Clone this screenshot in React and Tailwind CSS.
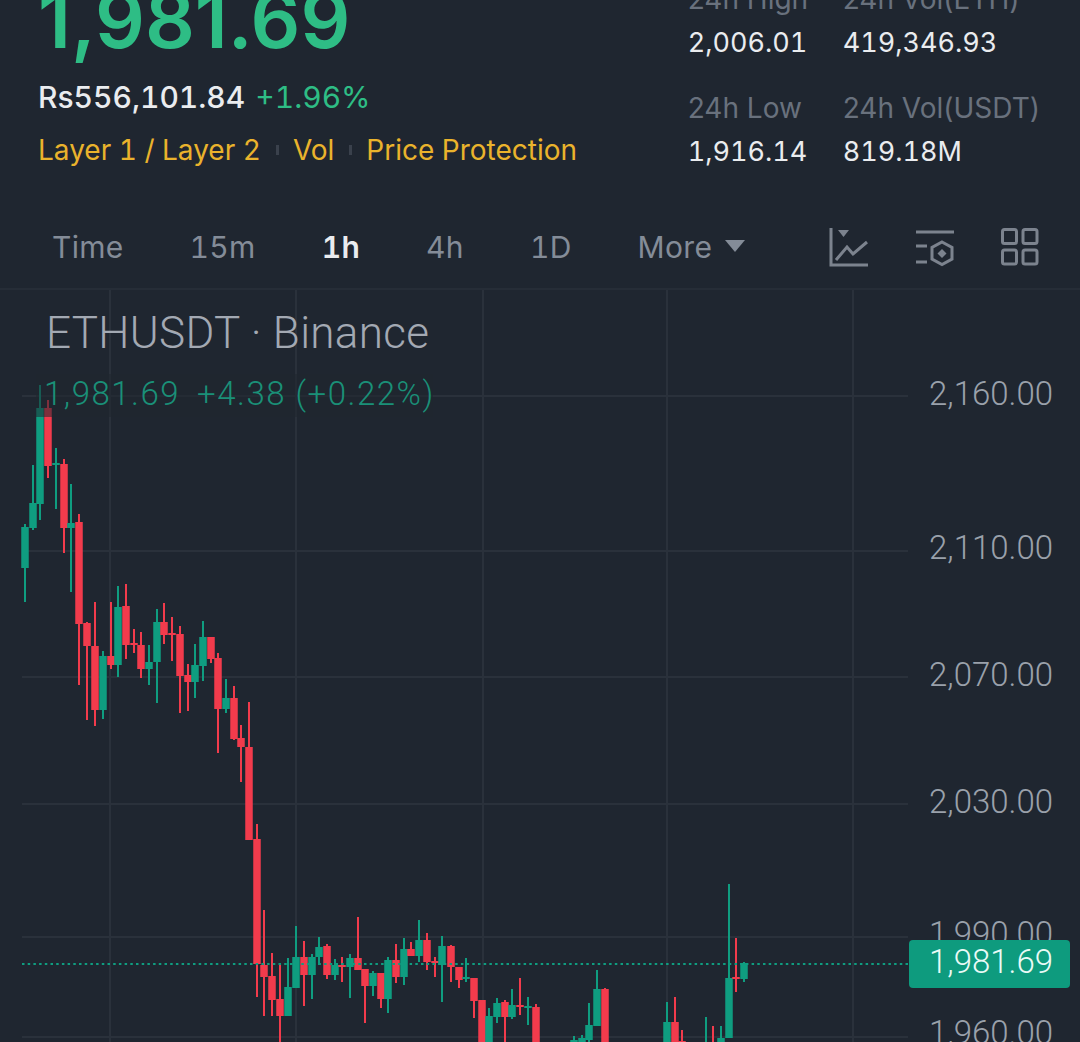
import React from "react";

// [center x, wick top, wick bottom, body top, body bottom, up?]
const candles = [
  [25, 524, 602, 527, 568, 1], [33, 465, 530, 503, 528, 1], [40, 385, 520, 408, 504, 1],
  [48, 400, 478, 408, 466, 0], [56, 448, 509, 463, 465, 1], [64, 459, 553, 464, 528, 0],
  [71, 484, 592, 523, 528, 1], [79, 514, 685, 522, 624, 0], [87, 622, 720, 623, 646, 0],
  [95, 602, 726, 646, 710, 0], [103, 651, 719, 656, 710, 1], [111, 602, 669, 656, 665, 0],
  [118, 586, 677, 607, 665, 1], [126, 584, 659, 606, 645, 0], [134, 629, 653, 643, 645, 0],
  [141, 632, 678, 645, 669, 0], [149, 645, 685, 662, 669, 1], [157, 609, 703, 622, 662, 1],
  [164, 603, 644, 622, 635, 0], [172, 617, 661, 633, 635, 0], [180, 626, 713, 634, 676, 0],
  [188, 664, 711, 675, 682, 0], [195, 644, 698, 665, 682, 1], [203, 621, 681, 637, 666, 1],
  [211, 637, 663, 637, 659, 0], [218, 653, 753, 658, 709, 0], [226, 679, 713, 698, 709, 1],
  [234, 686, 740, 698, 739, 0], [241, 725, 782, 738, 747, 0], [249, 702, 840, 747, 840, 0],
  [257, 824, 997, 839, 964, 0], [264, 910, 1016, 965, 977, 0], [272, 953, 1016, 976, 1000, 0],
  [280, 963, 1042, 999, 1016, 0], [288, 958, 1016, 987, 1016, 1], [296, 926, 988, 957, 988, 1],
  [304, 941, 1006, 957, 975, 0], [312, 954, 999, 957, 975, 1], [319, 937, 965, 947, 957, 1],
  [327, 944, 979, 946, 975, 0], [335, 959, 980, 965, 975, 1], [342, 957, 982, 965, 967, 0],
  [350, 954, 998, 958, 967, 1], [358, 917, 970, 958, 970, 0], [365, 969, 1023, 969, 986, 0],
  [373, 971, 996, 973, 986, 1], [381, 973, 1008, 973, 999, 0], [388, 957, 1013, 960, 999, 1],
  [396, 944, 983, 960, 977, 0], [404, 938, 985, 949, 977, 1], [411, 942, 956, 949, 956, 0],
  [419, 920, 962, 940, 956, 1], [427, 933, 970, 940, 962, 0], [435, 957, 977, 961, 963, 0],
  [442, 936, 1002, 946, 965, 1], [451, 945, 982, 946, 967, 0], [459, 967, 988, 967, 980, 0],
  [466, 958, 982, 977, 979, 1], [474, 978, 1018, 978, 1001, 0], [482, 1000, 1042, 1000, 1042, 0],
  [489, 1008, 1042, 1016, 1042, 1], [497, 998, 1023, 1003, 1017, 1], [505, 1000, 1042, 1002, 1017, 0],
  [512, 989, 1019, 1005, 1017, 1], [520, 978, 1015, 1005, 1007, 0], [528, 997, 1025, 1006, 1007, 1],
  [536, 1004, 1042, 1007, 1042, 0], [574, 1036, 1042, 1040, 1042, 1], [582, 1035, 1042, 1038, 1042, 1],
  [589, 1003, 1042, 1025, 1040, 1], [597, 970, 1026, 989, 1026, 1], [605, 988, 1042, 989, 1042, 0],
  [667, 1002, 1042, 1022, 1042, 1], [675, 997, 1042, 1022, 1042, 0], [682, 1030, 1042, 1041, 1042, 0],
  [706, 1017, 1042, 1042, 1042, 1], [713, 1026, 1042, 1042, 1042, 0], [721, 1026, 1042, 1038, 1042, 1],
  [729, 884, 1038, 978, 1038, 1], [736, 938, 992, 977, 979, 0], [744, 962, 982, 963, 979, 1],
];

const gridY = [396, 551, 677, 804, 937, 1037];
const gridX = [110, 296, 483, 667, 853];
const axis = [
  ["2,160.00", 394],
  ["2,110.00", 548],
  ["2,070.00", 675],
  ["2,030.00", 802],
  ["1,990.00", 934],
  ["1,960.00", 1033],
];
const tabs = ["Time", "15m", "1h", "4h", "1D"];

function Chart() {
  return (
    <svg className="absolute inset-0 w-full h-full" viewBox="0 290 1080 752">
      {gridY.map((y) => (
        <line key={y} x1="22" x2="908" y1={y} y2={y} stroke="#2a313b" strokeWidth="2" />
      ))}
      {gridX.map((x) => (
        <line key={x} x1={x} x2={x} y1="290" y2="1042" stroke="#2a313b" strokeWidth="2" />
      ))}
      {candles.map(([x, wt, wb, bt, bb, up]) => {
        const color = up ? "#0f9d80" : "#f23b4c";
        return (
          <g key={x} fill={color}>
            <rect x={x - 1} y={wt} width="2" height={wb - wt} />
            <rect x={x - 3.75} y={bt} width="7.5" height={Math.max(bb - bt, 2)} />
          </g>
        );
      })}
      <line x1="22" x2="908" y1="964" y2="964" stroke="#0f9d80" strokeWidth="2" strokeDasharray="2.5 3.2" />
      <rect x="36" y="374" width="397" height="43" fill="#1f2630" opacity="0.55" />
    </svg>
  );
}

function IndicatorIcon() {
  return (
    <svg width="40" height="40" viewBox="0 0 40 40" fill="none" stroke="#7c838e" strokeWidth="3">
      <path d="M2 1V38H39" />
      <path d="M7 33L18 20L24 27L38 15" />
      <path d="M9 3H20L14.5 10Z" fill="#7c838e" stroke="none" />
    </svg>
  );
}

function SettingsIcon() {
  return (
    <svg width="40" height="40" viewBox="0 0 40 40" fill="none" stroke="#7c838e" strokeWidth="3">
      <path d="M1 5H39M1 19H12M1 35H12" />
      <path d="M27 15L37 20.5V32L27 37.5L17 32V20.5Z" />
      <path d="M27 22L31.5 26.5L27 31L22.5 26.5Z" fill="#7c838e" stroke="none" />
    </svg>
  );
}

function GridIcon() {
  return (
    <svg width="38" height="38" viewBox="0 0 38 38" fill="none" stroke="#7c838e" strokeWidth="3">
      <rect x="1.5" y="1.5" width="14" height="14" rx="2" />
      <rect x="22" y="1.5" width="14" height="14" rx="2" />
      <rect x="1.5" y="22" width="14" height="14" rx="2" />
      <rect x="22" y="22" width="14" height="14" rx="2" />
    </svg>
  );
}

function Stat({ label, value }) {
  return (
    <div>
      <div className="text-[28px] leading-[43px] text-[#69717d]">{label}</div>
      <div className="text-[27px] leading-[43px] text-[#eaecef] tabular-nums">{value}</div>
    </div>
  );
}

export default function App() {
  return (
    <div className="w-[1080px] h-[1042px] overflow-hidden flex flex-col bg-[#1f2630] font-['Inter',sans-serif]">
      {/* Price header */}
      <div className="flex justify-between h-[205px] shrink-0">
        <div className="pl-[38px]">
          <div className="mt-[-25px] text-[78px] leading-[90px] font-semibold text-[#2ebd85] whitespace-nowrap">1,981.69</div>
          <div className="mt-[12px] flex gap-[10px] text-[30px] leading-[40px] tabular-nums whitespace-nowrap">
            <span className="text-[#eaecef] font-medium">Rs556,101.84</span>
            <span className="text-[#2ebd85]">+1.96%</span>
          </div>
          <div className="mt-[15px] flex items-center text-[#eab32c] text-[28px] leading-[36px] tabular-nums whitespace-nowrap">
            <span>Layer 1 / Layer 2</span>
            <span className="w-[3px] h-[10px] ml-[15px] mr-[14px] bg-[#3a414c]"></span>
            <span>Vol</span>
            <span className="w-[3px] h-[10px] ml-[15px] mr-[14px] bg-[#3a414c]"></span>
            <span>Price Protection</span>
          </div>
        </div>
        <div className="grid grid-cols-[155px_auto] content-start gap-y-[23px] pr-[40px] mt-[-22px] whitespace-nowrap">
          <Stat label="24h High" value="2,006.01" />
          <Stat label="24h Vol(ETH)" value="419,346.93" />
          <Stat label="24h Low" value="1,916.14" />
          <Stat label="24h Vol(USDT)" value="819.18M" />
        </div>
      </div>

      {/* Interval tabs */}
      <div className="flex items-center h-[85px] shrink-0 pl-[52px] pr-[41px] border-b-2 border-[#262d37]">
        <div className="flex items-center gap-[66px] pt-[2px] text-[30px] tracking-[0.3px] tabular-nums text-[#848c98]">
          {tabs.map((t) => (
            <span key={t} className={t === "1h" ? "text-[#eaecef] font-semibold" : ""}>{t}</span>
          ))}
          <span className="flex items-center gap-[13px]">
            More
            <span className="w-0 h-0 border-x-[10px] border-x-transparent border-t-[12px] border-t-[#848c98] mb-[4px]"></span>
          </span>
        </div>
        <div className="ml-auto flex items-center gap-[46px]">
          <IndicatorIcon />
          <SettingsIcon />
          <GridIcon />
        </div>
      </div>

      {/* Chart */}
      <div className="relative flex-1 font-['Roboto',sans-serif] font-light">
        <Chart />
        <div className="absolute left-[46px] top-[14px] text-[44px] leading-[58px] text-[#a3a9b3] tracking-[0.3px] whitespace-nowrap">ETHUSDT · Binance</div>
        <div className="absolute left-[44px] top-[84px] flex gap-[17px] text-[33px] leading-[40px] tracking-[1.5px] text-[#1a9078] whitespace-nowrap">
          <span>1,981.69</span>
          <span>+4.38 (+0.22%)</span>
        </div>
        {axis.map(([label, y]) => (
          <div
            key={label}
            className="absolute left-[929px] text-[33px] leading-[40px] text-[#9aa1ab]"
            style={{ top: y - 290 - 20 }}
          >
            {label}
          </div>
        ))}
        <div className="absolute left-[909px] top-[650px] w-[161px] h-[48px] rounded-[4px] bg-[#0e9b7e] pl-[20px] text-[33px] leading-[44px] text-[#eafaf6]">
          1,981.69
        </div>
      </div>
    </div>
  );
}
